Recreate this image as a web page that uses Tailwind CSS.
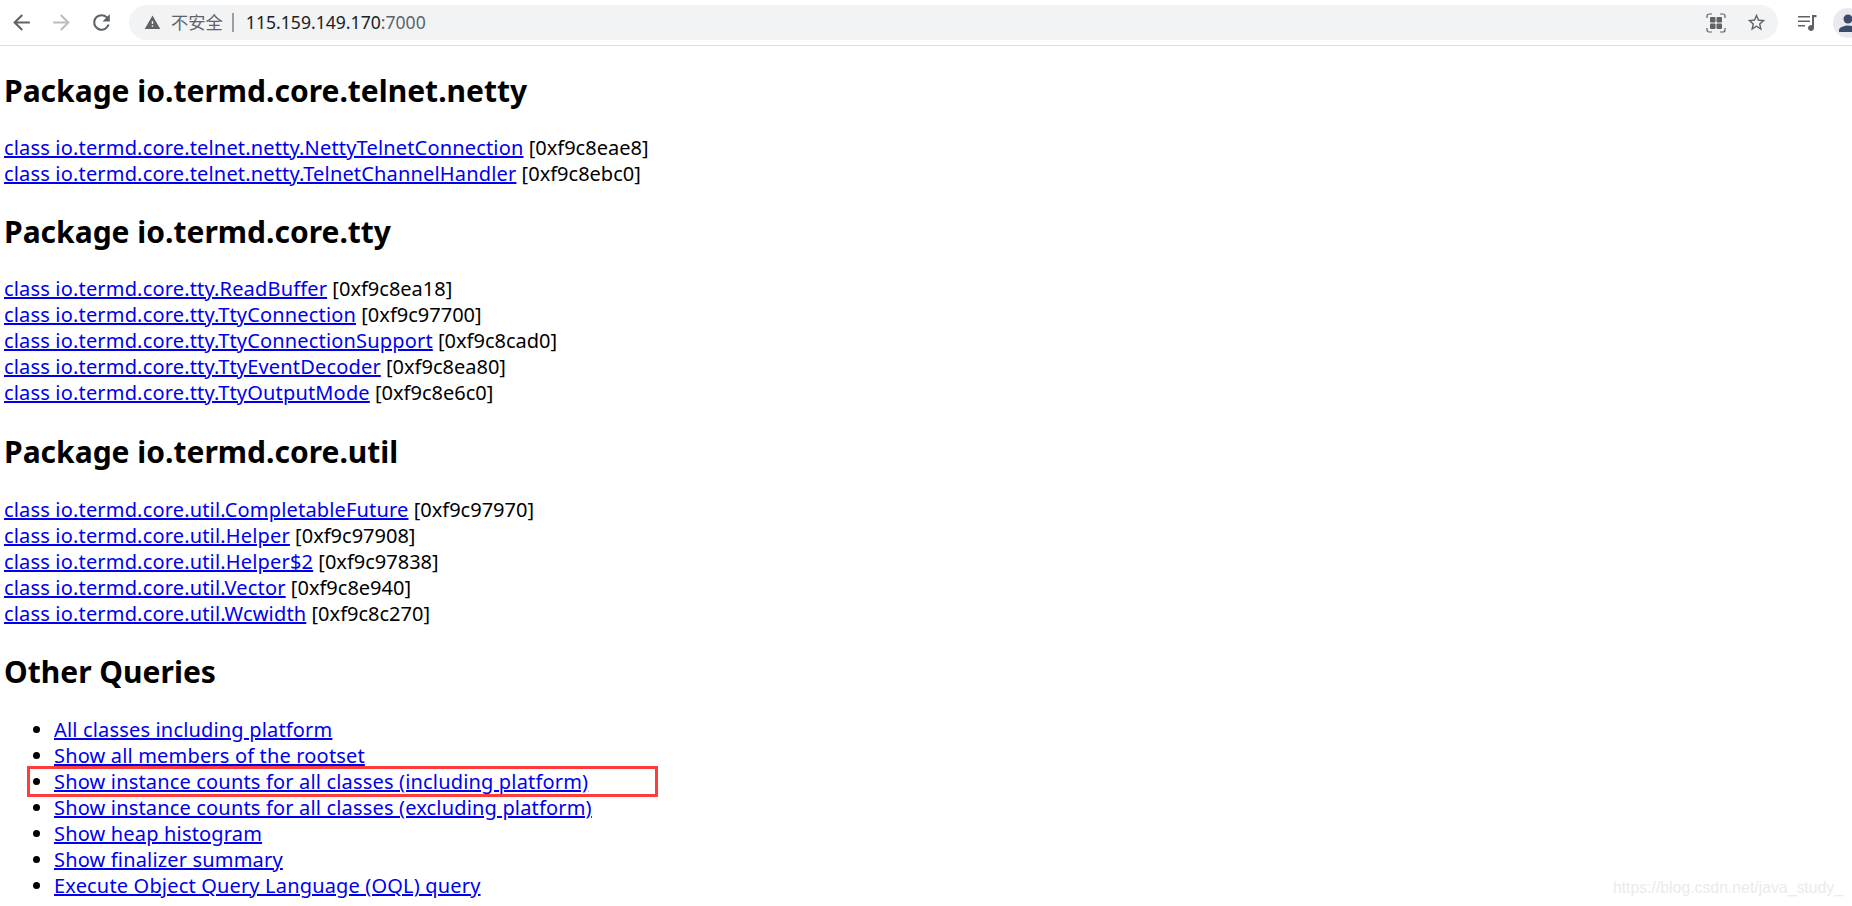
<!DOCTYPE html>
<html lang="en">
<head>
<meta charset="UTF-8">
<title>115.159.149.170:7000</title>
<script src="https://cdn.jsdelivr.net/npm/@tailwindcss/browser@4"></script>
</head>
<body class="bg-white text-black font-['Noto_Sans','Noto_Sans_CJK_SC',sans-serif] h-[906px] overflow-hidden relative">
  <!-- browser toolbar -->
  <div class="h-[46px] border-b border-[#dcdcdc] flex items-center pl-[9px] overflow-hidden">
    <svg class="w-[25px] h-[25px] shrink-0 text-[#5f6368]" viewBox="0 0 24 24" fill="currentColor"><path d="M20 11H7.83l5.59-5.59L12 4l-8 8 8 8 1.41-1.41L7.83 13H20v-2z"/></svg>
    <svg class="w-[25px] h-[25px] shrink-0 ml-[15px] text-[#bdbdbd]" viewBox="0 0 24 24" fill="currentColor"><path d="M12 4l-1.41 1.41L16.17 11H4v2h12.17l-5.58 5.59L12 20l8-8z"/></svg>
    <svg class="w-[25px] h-[25px] shrink-0 ml-[15px] text-[#5f6368]" viewBox="0 0 24 24" fill="currentColor"><path d="M17.65 6.35A7.96 7.96 0 0 0 12 4a8 8 0 1 0 7.75 10h-2.08A6 6 0 1 1 12 6c1.66 0 3.14.69 4.22 1.78L13 11h7V4l-2.35 2.35z"/></svg>
    <div class="ml-[15px] w-[1649px] h-[35px] rounded-full bg-[#f1f3f4] flex items-center pl-[15px] pr-[11px] shrink-0">
      <svg class="w-[17px] h-[17px] text-[#5f6368]" viewBox="0 0 24 24" fill="currentColor"><path d="M1 21h22L12 2 1 21zm12-3h-2v-2h2v2zm0-4h-2v-4h2v4z"/></svg>
      <span class="ml-[10px] text-[17.3px] text-[#5f6368]">不安全</span>
      <span class="ml-[9px] w-[2px] h-[19px] bg-[#9aa0a6]"></span>
      <span class="ml-[12px] text-[17.6px] text-[#202124]">115.159.149.170<span class="text-[#5f6368]">:7000</span></span>
      <svg class="ml-auto w-[20px] h-[20px] text-[#5f6368]" viewBox="0 0 20 20" fill="none" stroke="currentColor" stroke-width="1.2"><path d="M1 5V3a2 2 0 0 1 2-2h3M14 1h3a2 2 0 0 1 2 2v2M19 15v2a2 2 0 0 1-2 2h-3M6 19H3a2 2 0 0 1-2-2v-2"/><g fill="currentColor" stroke="none"><rect x="4" y="4" width="5.5" height="5.5" rx="1"/><rect x="10.5" y="4" width="5.5" height="5.5" rx="1"/><rect x="4" y="10.5" width="5.5" height="5.5" rx="1"/><rect x="10.5" y="10.5" width="5.5" height="5.5" rx="1"/></g></svg>
      <svg class="ml-[20px] w-[21px] h-[21px] text-[#5f6368]" viewBox="0 0 24 24" fill="currentColor"><path d="M22 9.24l-7.19-.62L12 2 9.19 8.63 2 9.24l5.46 4.73L5.82 21 12 17.27 18.18 21l-1.63-7.03L22 9.24zM12 15.4l-3.76 2.27 1-4.28-3.32-2.88 4.38-.38L12 6.1l1.71 4.04 4.38.38-3.32 2.88 1 4.28L12 15.4z"/></svg>
    </div>
    <svg class="ml-[19px] w-[20px] h-[20px] shrink-0 text-[#5f6368]" viewBox="0 0 20 20" fill="currentColor"><path d="M1 3h12v1.6H1zM1 7.5h12v1.6H1zM1 12h7v1.6H1zM15 2h4.5v2.2H17V15a3 3 0 1 1-2-2.8z"/></svg>
    <div class="ml-[16px] w-[30px] h-[30px] rounded-full bg-[#e8eaed] shrink-0 flex items-center justify-center">
      <svg class="w-[24px] h-[24px] text-[#3c4b6b]" viewBox="0 0 24 24" fill="currentColor"><circle cx="12" cy="8" r="4.5"/><path d="M3 21v-2c0-3 6-4.5 9-4.5s9 1.5 9 4.5v2z"/></svg>
    </div>
  </div>

  <!-- page content -->
  <main class="px-[4px] text-[20px] leading-[26px]">
    <h2 class="text-[30px] leading-[40px] font-bold mt-[25px] mb-[24px]">Package io.termd.core.telnet.netty</h2>
    <div><a class="text-[#0000ee] underline tracking-[0.17px]" href="#">class io.termd.core.telnet.netty.NettyTelnetConnection</a> [0xf9c8eae8]</div>
    <div><a class="text-[#0000ee] underline tracking-[0.17px]" href="#">class io.termd.core.telnet.netty.TelnetChannelHandler</a> [0xf9c8ebc0]</div>

    <h2 class="text-[30px] leading-[40px] font-bold mt-[25px] mb-[24px]">Package io.termd.core.tty</h2>
    <div><a class="text-[#0000ee] underline tracking-[0.17px]" href="#">class io.termd.core.tty.ReadBuffer</a> [0xf9c8ea18]</div>
    <div><a class="text-[#0000ee] underline tracking-[0.17px]" href="#">class io.termd.core.tty.TtyConnection</a> [0xf9c97700]</div>
    <div><a class="text-[#0000ee] underline tracking-[0.17px]" href="#">class io.termd.core.tty.TtyConnectionSupport</a> [0xf9c8cad0]</div>
    <div><a class="text-[#0000ee] underline tracking-[0.17px]" href="#">class io.termd.core.tty.TtyEventDecoder</a> [0xf9c8ea80]</div>
    <div><a class="text-[#0000ee] underline tracking-[0.17px]" href="#">class io.termd.core.tty.TtyOutputMode</a> [0xf9c8e6c0]</div>

    <h2 class="text-[30px] leading-[40px] font-bold mt-[26px] mb-[25px]">Package io.termd.core.util</h2>
    <div><a class="text-[#0000ee] underline tracking-[0.17px]" href="#">class io.termd.core.util.CompletableFuture</a> [0xf9c97970]</div>
    <div><a class="text-[#0000ee] underline tracking-[0.17px]" href="#">class io.termd.core.util.Helper</a> [0xf9c97908]</div>
    <div><a class="text-[#0000ee] underline tracking-[0.17px]" href="#">class io.termd.core.util.Helper$2</a> [0xf9c97838]</div>
    <div><a class="text-[#0000ee] underline tracking-[0.17px]" href="#">class io.termd.core.util.Vector</a> [0xf9c8e940]</div>
    <div><a class="text-[#0000ee] underline tracking-[0.17px]" href="#">class io.termd.core.util.Wcwidth</a> [0xf9c8c270]</div>

    <h2 class="text-[30px] leading-[40px] font-bold mt-[25px] mb-[25px]">Other Queries</h2>
    <ul class="list-disc pl-[50px]">
      <li><a class="text-[#0000ee] underline tracking-[0.17px]" href="#">All classes including platform</a></li>
      <li><a class="text-[#0000ee] underline tracking-[0.17px]" href="#">Show all members of the rootset</a></li>
      <li><a class="text-[#0000ee] underline tracking-[0.17px]" href="#">Show instance counts for all classes (including platform)</a></li>
      <li><a class="text-[#0000ee] underline tracking-[0.17px]" href="#">Show instance counts for all classes (excluding platform)</a></li>
      <li><a class="text-[#0000ee] underline tracking-[0.17px]" href="#">Show heap histogram</a></li>
      <li><a class="text-[#0000ee] underline tracking-[0.17px]" href="#">Show finalizer summary</a></li>
      <li><a class="text-[#0000ee] underline tracking-[0.17px]" href="#">Execute Object Query Language (OQL) query</a></li>
    </ul>
  </main>

  <!-- red annotation box -->
  <div class="absolute left-[27px] top-[766px] w-[631px] h-[31px] border-[3px] border-[#ff3b3b]"></div>
  <!-- watermark -->
  <div class="absolute right-[9px] top-[877px] text-[15.8px] leading-[22px] text-[#ebebeb] font-['Liberation_Sans',sans-serif]">https://blog.csdn.net/java_study_</div>
</body>
</html>
